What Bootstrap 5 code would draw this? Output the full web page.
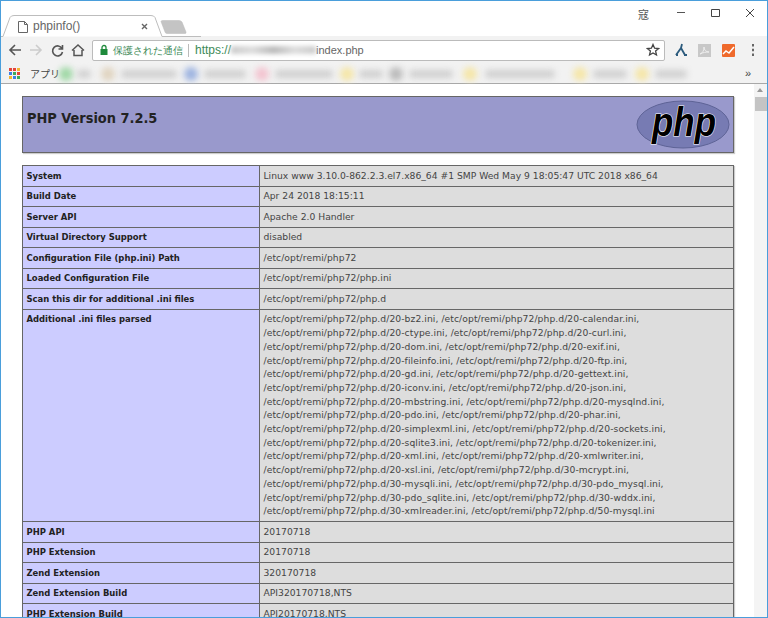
<!doctype html>
<html lang="ja">
<head>
<meta charset="utf-8">
<title>phpinfo()</title>
<link href="https://cdn.jsdelivr.net/npm/bootstrap@5.3.0/dist/css/bootstrap.min.css" rel="stylesheet">
<style>
html,body{height:100%;margin:0;overflow:hidden;background:#fff}
body{font-family:"Noto Sans CJK JP","Liberation Sans",sans-serif}
.win{width:768px;height:618px;border:1px solid #4a9edb;overflow:hidden;background:#fff}
.titlebar{height:35px;background:#fff;position:relative;flex:none}
.tabshape{position:absolute;left:0;top:0}
.tabtext{position:absolute;left:32px;top:14px;height:22px;font:12px/22px "Liberation Sans",sans-serif;color:#666}
.wctl{position:absolute;left:-1px;top:0;width:768px;height:30px}
.imeglyph{position:absolute;left:637px;top:5px;font:11px/16px "Noto Sans CJK JP",sans-serif;color:#555}
.toolbar{height:28px;background:#f2f2f2;flex:none;padding-left:6px}
.tbtn{width:16px;height:16px;flex:none;margin-right:5px}
.omni{width:573px;height:21px;background:#fff;border:1px solid #bbb;border-radius:2px;margin-left:1px;font:12px/19px "Liberation Sans",sans-serif;color:#666;padding-left:6px;flex:none}
.secure{color:#3c8a57;font-size:9.5px;padding:0 5px 0 4px;border-right:1px solid #bbb;height:13px;line-height:13px;margin-right:6px}
.scheme{color:#3c8a57}
.urlblur{width:85px;height:8px;background:linear-gradient(90deg,#ccc,#ddd,#bbb,#ddd,#ccc);filter:blur(2px)}
.urlend{font-size:11px}
.tool1{margin-left:8px;flex:none}
.tool2{margin-left:9px;flex:none}
.tool3{margin-left:11px;flex:none}
.tool4{margin-left:16px;flex:none}
.bookbar{height:20px;background:#f2f2f2;border-bottom:1px solid #a8a8a8;flex:none;padding-left:8px;font:10px/19px "Noto Sans CJK JP",sans-serif;color:#444}
.bl{height:8px;border-radius:4px;background:#cfcfcf;filter:blur(3px);flex:none}
.bi{width:14px;height:14px;border-radius:50%;filter:blur(3px);flex:none}
.pagearea{flex:1;min-height:0;overflow:hidden;position:relative;background:#fff}
.phpsheet{padding:12px 0 0 21px;width:733px;font-family:"DejaVu Sans",sans-serif;font-size:9.2px;color:#222}
.phphead{height:57px;background:#9999cc;border:1px solid #666;box-shadow:1px 1px 1px #ccc;position:relative;margin-bottom:12px}
.phphead h1{font:700 14.4px/18px "DejaVu Sans Condensed","DejaVu Sans",sans-serif;color:#222;margin:0;padding:12px 0 0 4px}
.phplogo{position:absolute;right:3px;top:3px}
.phptable{width:712px;border-collapse:collapse;table-layout:fixed;box-shadow:1px 1px 1px #ccc}
.phptable td{border:1px solid #666;padding:2.6px 3.5px 3.25px;line-height:13.7px;vertical-align:top}
.phptable td.ekey{width:237px;background:#ccccff;font:700 9.4px/13.7px "DejaVu Sans Condensed","DejaVu Sans",sans-serif;color:#222}
.phptable td.eval{background:#ddd;color:#444}
.phptable td.pathval{letter-spacing:.07px}
.sbar{position:absolute;right:0;top:0;width:13px;bottom:0;background:#f4f4f4}
.sthumb{position:absolute;left:1px;right:0;top:13px;height:14px;background:#c4c4c4}
.sarrow{position:absolute;left:3px;top:4px;width:0;height:0;border:3px solid transparent;border-top:0;border-bottom:4px solid #999}
</style>
</head>
<body>
<div class="win d-flex flex-column">
  <div class="titlebar">
    <svg class="tabshape" width="200" height="36" viewBox="0 0 200 36">
      <path d="M0 35.500H2L9 16.500Q10 14.500 13 14.500H150Q153 14.500 154 16.500L161 35.500H200" fill="#fff" stroke="#bdbdbd"/>
      <path d="M160 20.500Q160 19.500 162 19.500H178Q180 19.500 181 21L185 31Q185.500 32.500 184 32.500H166Q164.500 32.500 164 31Z" fill="#c4c4c4" stroke="#bbb" stroke-width=".5"/>
      <path d="M17.500 20.500H23.500L26.500 23.500V31.500H17.500Z M23.500 20.500V23.500H26.500" fill="#fff" stroke="#666"/>
      <path d="M141 23l5 5M146 23l-5 5" stroke="#666" stroke-width="1.400" fill="none"/>
    </svg>
    <div class="tabtext">phpinfo()</div>
    <svg class="wctl" viewBox="0 0 768 30">
      <path d="M677 11.500H685" stroke="#555" fill="none"/>
      <path d="M711.500 8.500h8v7h-8z" fill="none" stroke="#444"/>
      <path d="M746 8l8 8M754 8l-8 8" fill="none" stroke="#444"/>
    </svg>
    <span class="imeglyph">寇</span>
  </div>
  <div class="toolbar d-flex align-items-center">
    <svg class="tbtn" viewBox="0 0 16 16"><path d="M14 8H3M8 3 3 8l5 5" fill="none" stroke="#555" stroke-width="1.600"/></svg>
    <svg class="tbtn" viewBox="0 0 16 16"><path d="M2 8h11M8 3l5 5-5 5" fill="none" stroke="#ccc" stroke-width="1.600"/></svg>
    <svg class="tbtn" viewBox="0 0 16 16"><path d="M13 6.500A5 5 0 1 0 13.500 10M13.500 3v4h-4" fill="none" stroke="#555" stroke-width="1.600"/></svg>
    <svg class="tbtn" viewBox="0 0 16 16"><path d="M2 8.500 8 3l6 5.500M4 8v5.500h8V8" fill="none" stroke="#555" stroke-width="1.500"/></svg>
    <div class="omni d-flex align-items-center">
      <svg width="10" height="12" viewBox="0 0 10 12"><path d="M3 5V3.500a2 2 0 0 1 4 0V5" fill="none" stroke="#1f8a3c" stroke-width="1.300"/><rect x="1.500" y="5" width="7" height="6" fill="#1f8a3c"/></svg>
      <span class="secure">保護された通信</span>
      <span class="scheme">https://</span><span class="urlblur"></span><span class="urlend">index.php</span>
      <svg class="ms-auto me-1" width="14" height="14" viewBox="0 0 14 14"><path d="M7 1.500 8.600 5.200l4 .3-3 2.600.9 3.900L7 10l-3.500 2 .9-3.900-3-2.600 4-.3z" fill="none" stroke="#444" stroke-width="1.300"/></svg>
    </div>
    <svg class="tool1" width="16" height="16" viewBox="0 0 16 16"><path d="M9 2 8 6l-5 7M8 6l4 7M3 13h2M11 13h3" fill="none" stroke="#2c5b7d" stroke-width="1.800"/></svg>
    <svg class="tool2" width="13" height="13" viewBox="0 0 13 13"><rect width="13" height="13" fill="#c8c8c8"/><path d="M2 10c3-1 4-4 4-7 0 3 2 5 5 5-3 0-6 .5-9 2z" fill="none" stroke="#eee"/></svg>
    <svg class="tool3" width="13" height="13" viewBox="0 0 13 13"><rect width="13" height="13" rx="1" fill="#ef6a2c"/><path d="M1 10l3-3 3 2 5-6" fill="none" stroke="#fff" stroke-width="1.500"/></svg>
    <svg class="tool4" width="4" height="12" viewBox="0 0 4 12"><path d="M2 0v2.500M2 4.800v2.500M2 9.500V12" stroke="#666" stroke-width="2"/></svg>
  </div>
  <div class="bookbar d-flex align-items-center">
    <svg width="11" height="11" viewBox="0 0 11 11" style="flex:none;margin-right:10px"><g><rect width="3" height="3" fill="#e5443a"/><rect x="4" width="3" height="3" fill="#e5443a"/><rect x="8" width="3" height="3" fill="#f2b632"/><rect y="4" width="3" height="3" fill="#3a80e5"/><rect x="4" y="4" width="3" height="3" fill="#3ea85a"/><rect x="8" y="4" width="3" height="3" fill="#e5443a"/><rect y="8" width="3" height="3" fill="#f2b632"/><rect x="4" y="8" width="3" height="3" fill="#3a80e5"/><rect x="8" y="8" width="3" height="3" fill="#3ea85a"/></g></svg>
    <span style="flex:none;margin-right:8px;width:21px;white-space:nowrap">アプリ</span>
    <span class="bi" style="background:#9fd8a5;margin-right:4px"></span><span class="bl" style="width:14px;margin-right:10px"></span>
    <span class="bi" style="background:#e0d4c0;margin-right:6px"></span><span class="bl" style="width:56px;margin-right:7px"></span>
    <span class="bi" style="background:#9db3e0;margin-right:6px"></span><span class="bl" style="width:42px;margin-right:9px"></span>
    <span class="bi" style="background:#f3c4d0;margin-right:6px"></span><span class="bl" style="width:58px;margin-right:7px"></span>
    <span class="bi" style="background:#f5e6a8;margin-right:5px"></span><span class="bl" style="width:24px;margin-right:6px"></span>
    <span class="bi" style="background:#bbb;margin-right:6px"></span><span class="bl" style="width:44px;margin-right:10px"></span>
    <span class="bi" style="background:#f5e6a8;margin-right:8px"></span><span class="bl" style="width:70px;margin-right:18px"></span>
    <span class="bi" style="background:#f5e6a8;margin-right:6px"></span><span class="bl" style="width:34px;margin-right:8px"></span>
    <span class="bi" style="background:#f5e6a8;margin-right:6px"></span><span class="bl" style="width:32px"></span>
    <span class="ms-auto me-3" style="font-size:11px;font-family:'Liberation Sans',sans-serif">»</span>
  </div>
  <div class="pagearea">
    <div class="phpsheet">
      <div class="phphead">
        <h1>PHP Version 7.2.5</h1>
        <svg class="phplogo" width="94" height="49" viewBox="0 0 94 49">
          <ellipse cx="47" cy="24.500" rx="46" ry="23.500" fill="#777bb3" stroke="#5e6396"/>
          <text x="48" y="36" text-anchor="middle" font-family="Liberation Sans,sans-serif" font-weight="700" font-style="italic" font-size="40" fill="#000" stroke="#fff" stroke-width="1.200" paint-order="stroke" textLength="64" lengthAdjust="spacingAndGlyphs">php</text>
        </svg>
      </div>
      <table class="phptable">
        <tr><td class="ekey">System</td><td class="eval">Linux www 3.10.0-862.2.3.el7.x86_64 #1 SMP Wed May 9 18:05:47 UTC 2018 x86_64</td></tr>
        <tr><td class="ekey">Build Date</td><td class="eval">Apr 24 2018 18:15:11</td></tr>
        <tr><td class="ekey">Server API</td><td class="eval">Apache 2.0 Handler</td></tr>
        <tr><td class="ekey">Virtual Directory Support</td><td class="eval">disabled</td></tr>
        <tr><td class="ekey">Configuration File (php.ini) Path</td><td class="eval pathval">/etc/opt/remi/php72</td></tr>
        <tr><td class="ekey">Loaded Configuration File</td><td class="eval pathval">/etc/opt/remi/php72/php.ini</td></tr>
        <tr><td class="ekey">Scan this dir for additional .ini files</td><td class="eval pathval">/etc/opt/remi/php72/php.d</td></tr>
        <tr><td class="ekey">Additional .ini files parsed</td><td class="eval pathval">/etc/opt/remi/php72/php.d/20-bz2.ini, /etc/opt/remi/php72/php.d/20-calendar.ini,<br>
/etc/opt/remi/php72/php.d/20-ctype.ini, /etc/opt/remi/php72/php.d/20-curl.ini,<br>
/etc/opt/remi/php72/php.d/20-dom.ini, /etc/opt/remi/php72/php.d/20-exif.ini,<br>
/etc/opt/remi/php72/php.d/20-fileinfo.ini, /etc/opt/remi/php72/php.d/20-ftp.ini,<br>
/etc/opt/remi/php72/php.d/20-gd.ini, /etc/opt/remi/php72/php.d/20-gettext.ini,<br>
/etc/opt/remi/php72/php.d/20-iconv.ini, /etc/opt/remi/php72/php.d/20-json.ini,<br>
/etc/opt/remi/php72/php.d/20-mbstring.ini, /etc/opt/remi/php72/php.d/20-mysqlnd.ini,<br>
/etc/opt/remi/php72/php.d/20-pdo.ini, /etc/opt/remi/php72/php.d/20-phar.ini,<br>
/etc/opt/remi/php72/php.d/20-simplexml.ini, /etc/opt/remi/php72/php.d/20-sockets.ini,<br>
/etc/opt/remi/php72/php.d/20-sqlite3.ini, /etc/opt/remi/php72/php.d/20-tokenizer.ini,<br>
/etc/opt/remi/php72/php.d/20-xml.ini, /etc/opt/remi/php72/php.d/20-xmlwriter.ini,<br>
/etc/opt/remi/php72/php.d/20-xsl.ini, /etc/opt/remi/php72/php.d/30-mcrypt.ini,<br>
/etc/opt/remi/php72/php.d/30-mysqli.ini, /etc/opt/remi/php72/php.d/30-pdo_mysql.ini,<br>
/etc/opt/remi/php72/php.d/30-pdo_sqlite.ini, /etc/opt/remi/php72/php.d/30-wddx.ini,<br>
/etc/opt/remi/php72/php.d/30-xmlreader.ini, /etc/opt/remi/php72/php.d/50-mysql.ini</td></tr>
        <tr><td class="ekey">PHP API</td><td class="eval">20170718</td></tr>
        <tr><td class="ekey">PHP Extension</td><td class="eval">20170718</td></tr>
        <tr><td class="ekey">Zend Extension</td><td class="eval">320170718</td></tr>
        <tr><td class="ekey">Zend Extension Build</td><td class="eval">API320170718,NTS</td></tr>
        <tr><td class="ekey">PHP Extension Build</td><td class="eval">API20170718,NTS</td></tr>
      </table>
    </div>
    <div class="sbar"><span class="sarrow"></span><span class="sthumb"></span></div>
  </div>
</div>
<script src="https://cdn.jsdelivr.net/npm/bootstrap@5.3.0/dist/js/bootstrap.bundle.min.js"></script>
</body>
</html>
